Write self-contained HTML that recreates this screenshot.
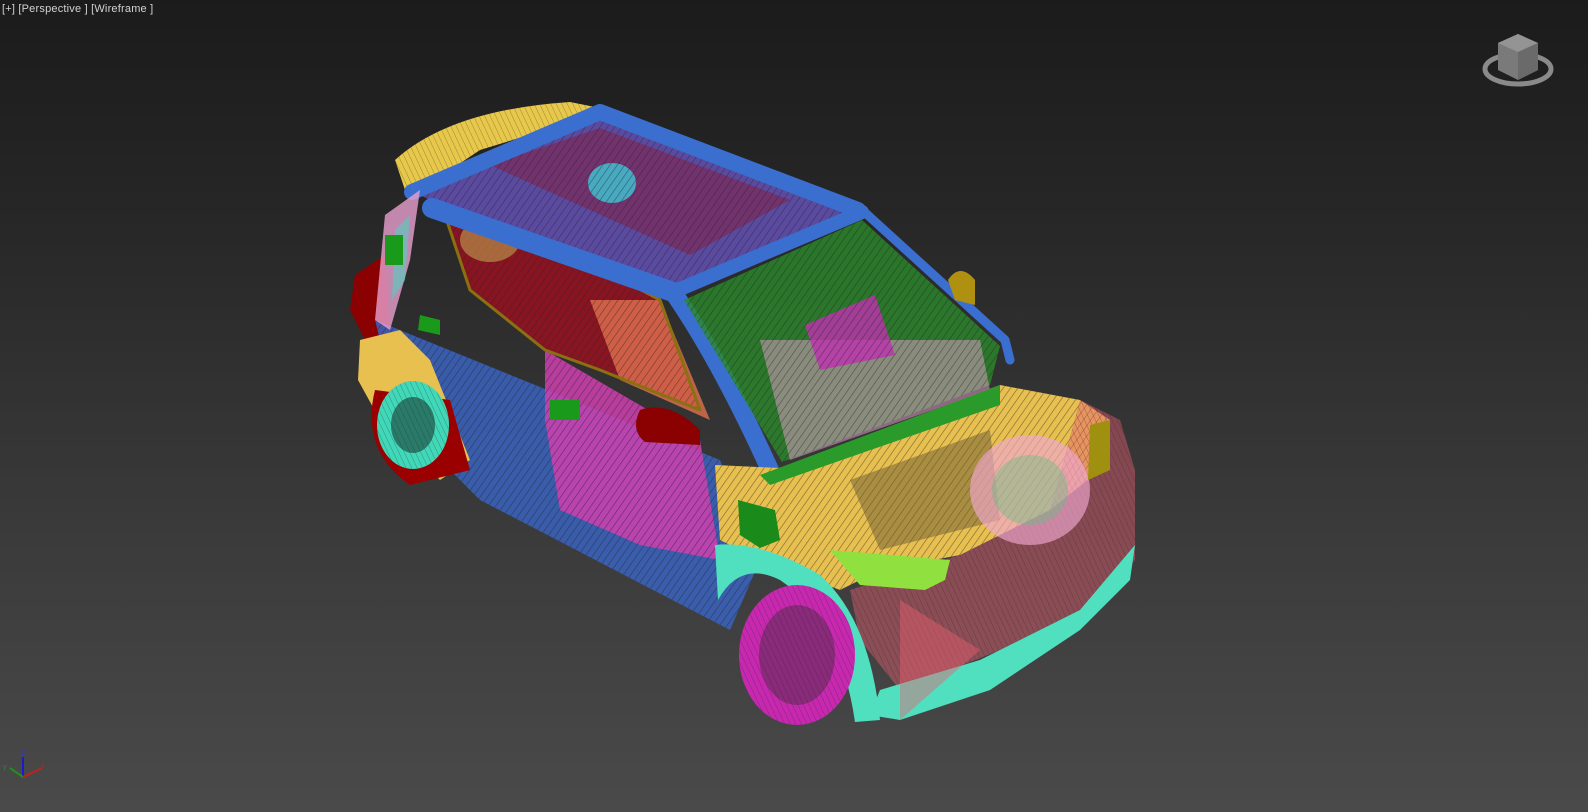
<!DOCTYPE html>
<html><head><meta charset="utf-8"><style>
html,body{margin:0;padding:0}
body{width:1588px;height:812px;overflow:hidden;background:linear-gradient(#1b1b1b 0%,#262626 25%,#383838 60%,#4a4a4a 100%);position:relative;font-family:"Liberation Sans",sans-serif}
.lbl{position:absolute;left:2px;top:3px;color:#d2d2d2;font-size:11px;letter-spacing:0.2px}
svg{position:absolute;left:0;top:0}
</style></head><body>
<div class="lbl">[+] [Perspective ] [Wireframe ]</div>
<svg width="1588" height="812" viewBox="0 0 1588 812">
<defs>
<pattern id="h" width="6" height="6" patternUnits="userSpaceOnUse" patternTransform="rotate(35)"><line x1="0" y1="0" x2="0" y2="6" stroke="#222" stroke-width="1.3" opacity=".55"/></pattern>
<pattern id="h2" width="5" height="5" patternUnits="userSpaceOnUse" patternTransform="rotate(-25)"><line x1="0" y1="0" x2="0" y2="5" stroke="#222" stroke-width="1" opacity=".4"/></pattern>
</defs>
<g stroke-linejoin="round">
<path d="M385 255 L355 275 L350 310 L365 340 L390 335 Z" fill="#8b0000"/>
<path d="M375 320 L720 460 L760 560 L730 630 L480 500 L400 420 Z" fill="#3a63c0" opacity=".85"/>
<path d="M375 320 L720 460 L760 560 L730 630 L480 500 L400 420 Z" fill="url(#h)"/>
<path d="M360 340 L400 330 L430 360 L470 460 L440 480 L380 420 L358 380 Z" fill="#e8c050"/>
<path d="M375 390 Q360 450 410 485 L470 470 L450 400 Z" fill="#9a0000"/>
<ellipse cx="413" cy="425" rx="36" ry="44" fill="#40d8b8"/>
<ellipse cx="413" cy="425" rx="22" ry="28" fill="#2a7a6a"/>
<ellipse cx="413" cy="425" rx="36" ry="44" fill="url(#h2)"/>
<path d="M545 350 L700 440 L720 560 L640 545 L560 510 L545 420 Z" fill="#d040b0" opacity=".85"/>
<path d="M545 350 L700 440 L720 560 L640 545 L560 510 L545 420 Z" fill="url(#h)"/>
<path d="M445 215 L520 225 L660 300 L700 410 L600 370 L545 350 L470 290 Z" fill="#9a1020" opacity=".85"/>
<path d="M590 300 L660 300 L710 420 L620 380 Z" fill="#e07050" opacity=".8"/>
<path d="M445 215 L520 225 L660 300 L700 410 L600 370 L545 350 L470 290 Z" fill="url(#h)" stroke="#8a7010" stroke-width="3"/>
<ellipse cx="490" cy="240" rx="30" ry="22" fill="#c0a050" opacity=".6"/>
<path d="M395 160 Q450 110 570 102 L610 110 L480 150 L420 190 L405 190 Z" fill="#e8c84a"/>
<path d="M395 160 Q450 110 570 102 L610 110 L480 150 L420 190 L405 190 Z" fill="url(#h2)"/>
<path d="M410 190 L600 112 L860 210 L673 292 L440 205 Z" fill="#5a4aa0"/>
<path d="M490 165 L600 128 L790 200 L690 255 Z" fill="#8a1a3a" opacity=".5"/>
<ellipse cx="612" cy="183" rx="24" ry="20" fill="#40c0d0" opacity=".85"/>
<path d="M410 190 L600 112 L860 210 L673 292 L440 205 Z" fill="url(#h)"/>
<g fill="none" stroke="#3a6fd0" stroke-linecap="round">
<path d="M412 192 L600 112 L858 210" stroke-width="16"/>
<path d="M432 208 L673 292" stroke-width="20"/>
<path d="M673 292 L862 212" stroke-width="14"/>
<path d="M860 208 L1005 340 L1010 360" stroke-width="9"/>
<path d="M673 292 Q720 360 770 470" stroke-width="18"/>
</g>
<path d="M684 300 L862 220 L1000 346 L990 385 L782 462 Z" fill="#2a8a2a" opacity=".8"/>
<path d="M760 340 L980 340 L990 390 L790 460 Z" fill="#e8a0d0" opacity=".5"/>
<path d="M805 325 L875 295 L895 355 L820 370 Z" fill="#c030b0" opacity=".8"/>
<path d="M684 300 L862 220 L1000 346 L990 385 L782 462 Z" fill="url(#h)"/>
<path d="M385 215 L420 190 L410 260 L390 330 L375 320 Z" fill="#e8a0d0" opacity=".8"/>
<path d="M395 230 L410 215 L405 280 L392 300 Z" fill="#50d0c0" opacity=".6"/>
<rect x="385" y="235" width="18" height="30" fill="#1a9a1a"/>
<path d="M715 465 L780 468 L1000 385 L1080 400 L1110 420 L1100 470 L1050 510 L960 555 L880 570 L840 590 L760 560 L720 540 Z" fill="#e8c050"/>
<path d="M715 465 L780 468 L1000 385 L1080 400 L1110 420 L1100 470 L1050 510 L960 555 L880 570 L840 590 L760 560 L720 540 Z" fill="url(#h)"/>
<path d="M850 480 L990 430 L1000 520 L880 550 Z" fill="#6a5a30" opacity=".5"/>
<path d="M760 475 L1000 385 L1000 405 L770 485 Z" fill="#2a9a2a"/>
<path d="M1080 400 L1120 420 L1135 470 L1135 560 L1100 600 L1000 650 L900 690 L860 640 L850 590 L960 555 L1050 510 Z" fill="#e86070" opacity=".45"/>
<path d="M1080 400 L1120 420 L1135 470 L1135 560 L1100 600 L1000 650 L900 690 L860 640 L850 590 L960 555 L1050 510 Z" fill="url(#h2)"/>
<ellipse cx="1030" cy="490" rx="60" ry="55" fill="#f0a8d0" opacity=".65"/>
<ellipse cx="1030" cy="490" rx="38" ry="35" fill="#60c080" opacity=".4"/>
<path d="M1090 425 L1110 420 L1110 470 L1088 480 Z" fill="#a09010"/>
<path d="M830 550 L950 560 L945 580 L925 590 L860 585 Z" fill="#90e040"/>
<path d="M1135 545 L1130 580 L1080 630 L990 690 L900 720 L870 715 L880 690 L980 660 L1080 610 Z" fill="#50e0c0"/>
<path d="M900 600 L980 650 L900 720 Z" fill="#e86070" opacity=".45"/>
<path d="M715 545 Q760 540 820 575 Q870 620 880 720 L855 722 Q840 620 780 580 Q740 560 718 600 Z" fill="#50e0c0"/>
<ellipse cx="797" cy="655" rx="58" ry="70" fill="#c828b0"/>
<ellipse cx="797" cy="655" rx="38" ry="50" fill="#8a2a7a"/>
<ellipse cx="797" cy="655" rx="58" ry="70" fill="url(#h2)"/>
<path d="M738 500 L775 510 L780 540 L760 548 L740 535 Z" fill="#1a8a1a"/>
<rect x="550" y="400" width="30" height="20" fill="#1a9a1a"/>
<path d="M420 315 L440 320 L440 335 L418 330 Z" fill="#1a9a1a"/>
<path d="M640 410 Q670 400 700 430 L700 445 L645 442 Q630 430 640 410 Z" fill="#8b0000"/>
<path d="M948 280 Q960 262 975 280 L975 305 L955 300 Z" fill="#b09010"/>
</g>
<g>
<ellipse cx="1518" cy="69" rx="33" ry="15" fill="none" stroke="#8a8a8a" stroke-width="5"/>
<path d="M1498 43 L1518 34 L1538 43 L1538 70 L1518 80 L1498 70 Z" fill="#7a7a7a"/>
<path d="M1498 43 L1518 34 L1538 43 L1518 52 Z" fill="#949494"/>
<path d="M1518 52 L1538 43 L1538 70 L1518 80 Z" fill="#6a6a6a"/>
</g>
<g stroke-width="2">
<line x1="23" y1="777" x2="23" y2="757" stroke="#1a1ad0"/>
<line x1="23" y1="777" x2="10" y2="768" stroke="#209020"/>
<line x1="23" y1="777" x2="42" y2="768" stroke="#c02020"/>
<text x="21" y="755" fill="#3030e0" font-size="8" font-family="Liberation Sans,sans-serif">z</text>
<text x="3" y="769" fill="#209020" font-size="7" font-family="Liberation Sans,sans-serif">y</text>
<text x="41" y="767" fill="#c02020" font-size="7" font-family="Liberation Sans,sans-serif">x</text>
</g>
</svg>
</body></html>
